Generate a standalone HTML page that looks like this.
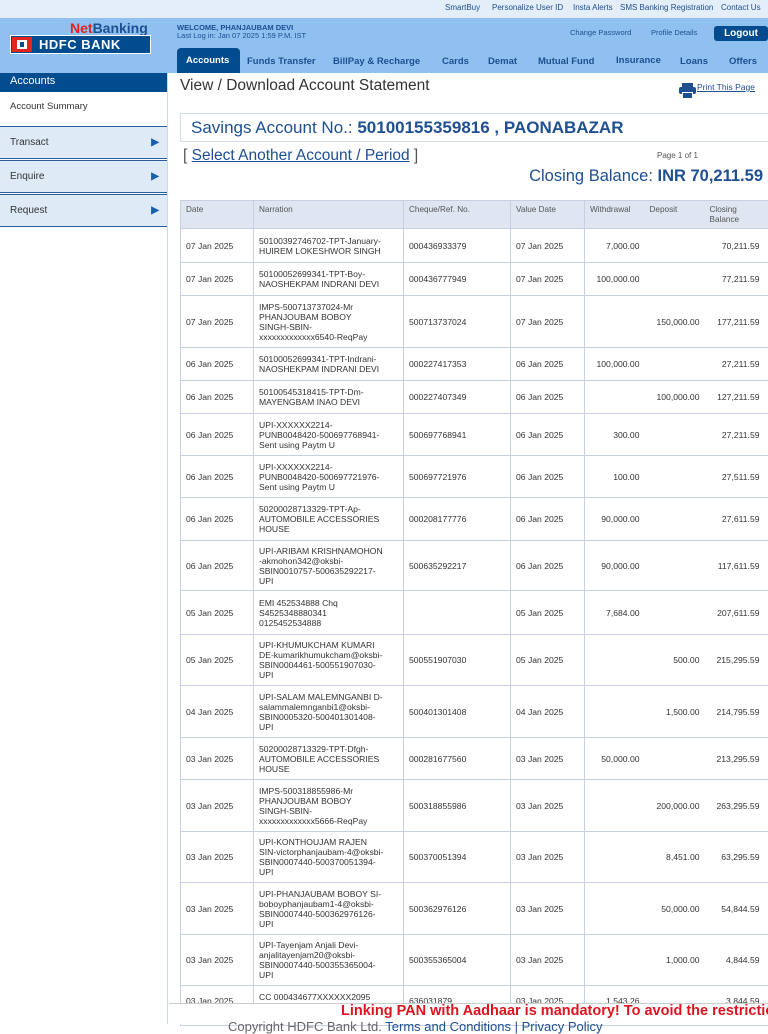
<!DOCTYPE html>
<html><head><meta charset="utf-8"><style>
*{margin:0;padding:0;box-sizing:border-box}
body{width:768px;height:1024px;overflow:hidden;background:#fff;font-family:"Liberation Sans",Arial,sans-serif;position:relative;color:#333}
.abs{position:absolute}
#top{left:0;top:0;width:768px;height:18px;background:#e3eef9}
#top span{position:absolute;top:3px;font-size:8px;color:#1d4f91}
#hdr{left:0;top:18px;width:768px;height:55px;background:#8fc0ef}
#side{left:0;top:73px;width:168px;height:951px;background:#fff;border-right:1px solid #cfd8e3}
.nav{position:absolute;top:49px;font-size:9.5px;color:#1d4f91;font-weight:bold}
.menu{position:absolute;left:0;width:167px;height:33px;background:#deebf7;border-top:1px solid #2c5f9e;border-bottom:1px solid #2c5f9e;font-size:10px;color:#333;padding:10px 0 0 10px}
.menu b{position:absolute;right:8px;top:10px;color:#1a5fae;font-size:10px}
table{position:absolute;left:180px;top:200px;width:600px;border-collapse:collapse;font-size:8.6px;color:#333;table-layout:fixed}
td{border:1px solid #c9cfe3;padding:0 5px;line-height:10px;vertical-align:middle;white-space:nowrap;overflow:hidden}
tr td:nth-child(n+5){border-left:none;border-right:none}
td.r{text-align:right}
td.c{text-align:right;padding-right:21px}
tr.h td{background:#dfe6f1;vertical-align:top;padding-top:4px;color:#555;font-size:8.2px}
</style></head><body>
<div id="top" class="abs">
<span style="left:445px">SmartBuy</span><span style="left:492px">Personalize User ID</span><span style="left:573px">Insta Alerts</span><span style="left:620px">SMS Banking Registration</span><span style="left:721px">Contact Us</span>
</div>
<div id="hdr" class="abs">
<div class="abs" style="left:70px;top:2px;font-size:14px;font-weight:bold"><span style="color:#e0261f">Net</span><span style="color:#1d4f91">Banking</span></div>
<div class="abs" style="left:10px;top:17px;width:141px;height:19px;background:#004c8f;border:1px solid #fff">
 <div class="abs" style="left:1px;top:1px;width:20px;height:15px;background:#e0261f"></div>
 <div class="abs" style="left:6px;top:4px;width:10px;height:9px;background:#fff"></div>
 <div class="abs" style="left:9px;top:6px;width:4px;height:5px;background:#004c8f"></div>
 <div class="abs" style="left:28px;top:1px;color:#fff;font-weight:900;font-size:13px;letter-spacing:.5px">HDFC BANK</div>
</div>
<div class="abs" style="left:177px;top:6px;font-size:7.5px;color:#1d4f91;line-height:8px;font-weight:bold">WELCOME, PHANJAUBAM DEVI<br><span style="font-weight:normal">Last Log in: Jan 07 2025 1:59 P.M. IST</span></div>
<div class="abs" style="left:570px;top:10px;font-size:7.5px;color:#1d4f91">Change Password</div>
<div class="abs" style="left:651px;top:10px;font-size:7.5px;color:#1d4f91">Profile Details</div>
<div class="abs" style="left:714px;top:8px;width:54px;height:15px;background:#004c8f;border-radius:3px;color:#fff;font-size:10px;font-weight:bold;text-align:center;line-height:15px">Logout</div>
<div class="abs" style="left:177px;top:30px;width:63px;height:25px;background:#004c8f;border-radius:4px 4px 0 0"></div>
<div class="nav" style="left:186px;top:37px;color:#fff">Accounts</div>
<div class="nav" style="left:247px;top:38px">Funds Transfer</div>
<div class="nav" style="left:333px;top:38px">BillPay &amp; Recharge</div>
<div class="nav" style="left:442px;top:38px">Cards</div>
<div class="nav" style="left:488px;top:38px">Demat</div>
<div class="nav" style="left:538px;top:38px">Mutual Fund</div>
<div class="nav" style="left:616px;top:37px">Insurance</div>
<div class="nav" style="left:680px;top:38px">Loans</div>
<div class="nav" style="left:729px;top:38px">Offers</div>
</div>
<div id="side" class="abs">
<div class="abs" style="left:0;top:0;width:167px;height:19px;background:#004c8f;color:#fff;font-size:11px;padding:2px 0 0 10px">Accounts</div>
<div class="abs" style="left:10px;top:28px;font-size:9.5px;color:#333">Account Summary</div>
<div class="menu" style="top:53px">Transact<b>▶</b></div>
<div class="menu" style="top:87px">Enquire<b>▶</b></div>
<div class="menu" style="top:121px">Request<b>▶</b></div>
</div>
<div class="abs" style="left:180px;top:77px;font-size:15.5px;color:#333">View / Download Account Statement</div>
<div class="abs" style="left:679px;top:83px;width:17px;height:16px"><div class="abs" style="left:3px;top:0;width:11px;height:4px;background:#1d4f91"></div><div class="abs" style="left:0;top:4px;width:17px;height:7px;background:#1d4f91;border-radius:2px"></div><div class="abs" style="left:3px;top:9px;width:11px;height:7px;background:#1d4f91;border:1px solid #fff"></div></div>
<div class="abs" style="left:697px;top:82px;font-size:8.5px;color:#1d4f91;text-decoration:underline">Print This Page</div>
<div class="abs" style="left:180px;top:113px;width:600px;height:29px;border:1px solid #d3dbe6;font-size:17px;color:#1d4f91;padding:4px 0 0 10px;white-space:nowrap">Savings Account No.: <b>50100155359816 , PAONABAZAR</b></div>
<div class="abs" style="left:183px;top:147px;font-size:15.5px;color:#555">[ <span style="color:#1d4f91;text-decoration:underline">Select Another Account / Period</span> ]</div>
<div class="abs" style="left:657px;top:151px;font-size:8px;color:#555">Page 1 of 1</div>
<div class="abs" style="right:5px;top:167px;font-size:16.5px;color:#1d4f91;white-space:nowrap">Closing Balance: <b>INR 70,211.59</b></div>
<table>
<colgroup><col style="width:73px"><col style="width:150px"><col style="width:107px"><col style="width:74px"><col style="width:60px"><col style="width:60px"><col style="width:76px"></colgroup>
<tr class="h" style="height:28px"><td>Date</td><td>Narration</td><td>Cheque/Ref. No.</td><td>Value Date</td><td>Withdrawal</td><td>Deposit</td><td>Closing<br>Balance</td></tr>
<tr style="height:34px"><td>07 Jan 2025</td><td>50100392746702-TPT-January-<br>HUIREM LOKESHWOR SINGH</td><td>000436933379</td><td>07 Jan 2025</td><td class="r">7,000.00</td><td></td><td class="c">70,211.59</td></tr>
<tr style="height:33px"><td>07 Jan 2025</td><td>50100052699341-TPT-Boy-<br>NAOSHEKPAM INDRANI DEVI</td><td>000436777949</td><td>07 Jan 2025</td><td class="r">100,000.00</td><td></td><td class="c">77,211.59</td></tr>
<tr style="height:52px"><td>07 Jan 2025</td><td>IMPS-500713737024-Mr<br>PHANJOUBAM BOBOY<br>SINGH-SBIN-<br>xxxxxxxxxxxxx6540-ReqPay</td><td>500713737024</td><td>07 Jan 2025</td><td></td><td class="r">150,000.00</td><td class="c">177,211.59</td></tr>
<tr style="height:33px"><td>06 Jan 2025</td><td>50100052699341-TPT-Indrani-<br>NAOSHEKPAM INDRANI DEVI</td><td>000227417353</td><td>06 Jan 2025</td><td class="r">100,000.00</td><td></td><td class="c">27,211.59</td></tr>
<tr style="height:33px"><td>06 Jan 2025</td><td>50100545318415-TPT-Dm-<br>MAYENGBAM INAO DEVI</td><td>000227407349</td><td>06 Jan 2025</td><td></td><td class="r">100,000.00</td><td class="c">127,211.59</td></tr>
<tr style="height:42px"><td>06 Jan 2025</td><td>UPI-XXXXXX2214-<br>PUNB0048420-500697768941-<br>Sent using Paytm U</td><td>500697768941</td><td>06 Jan 2025</td><td class="r">300.00</td><td></td><td class="c">27,211.59</td></tr>
<tr style="height:42px"><td>06 Jan 2025</td><td>UPI-XXXXXX2214-<br>PUNB0048420-500697721976-<br>Sent using Paytm U</td><td>500697721976</td><td>06 Jan 2025</td><td class="r">100.00</td><td></td><td class="c">27,511.59</td></tr>
<tr style="height:43px"><td>06 Jan 2025</td><td>50200028713329-TPT-Ap-<br>AUTOMOBILE ACCESSORIES<br>HOUSE</td><td>000208177776</td><td>06 Jan 2025</td><td class="r">90,000.00</td><td></td><td class="c">27,611.59</td></tr>
<tr style="height:50px"><td>06 Jan 2025</td><td>UPI-ARIBAM KRISHNAMOHON<br>-akmohon342@oksbi-<br>SBIN0010757-500635292217-<br>UPI</td><td>500635292217</td><td>06 Jan 2025</td><td class="r">90,000.00</td><td></td><td class="c">117,611.59</td></tr>
<tr style="height:44px"><td>05 Jan 2025</td><td>EMI 452534888 Chq<br>S4525348880341<br>0125452534888</td><td></td><td>05 Jan 2025</td><td class="r">7,684.00</td><td></td><td class="c">207,611.59</td></tr>
<tr style="height:51px"><td>05 Jan 2025</td><td>UPI-KHUMUKCHAM KUMARI<br>DE-kumarikhumukcham@oksbi-<br>SBIN0004461-500551907030-<br>UPI</td><td>500551907030</td><td>05 Jan 2025</td><td></td><td class="r">500.00</td><td class="c">215,295.59</td></tr>
<tr style="height:52px"><td>04 Jan 2025</td><td>UPI-SALAM MALEMNGANBI D-<br>salammalemnganbi1@oksbi-<br>SBIN0005320-500401301408-<br>UPI</td><td>500401301408</td><td>04 Jan 2025</td><td></td><td class="r">1,500.00</td><td class="c">214,795.59</td></tr>
<tr style="height:42px"><td>03 Jan 2025</td><td>50200028713329-TPT-Dfgh-<br>AUTOMOBILE ACCESSORIES<br>HOUSE</td><td>000281677560</td><td>03 Jan 2025</td><td class="r">50,000.00</td><td></td><td class="c">213,295.59</td></tr>
<tr style="height:52px"><td>03 Jan 2025</td><td>IMPS-500318855986-Mr<br>PHANJOUBAM BOBOY<br>SINGH-SBIN-<br>xxxxxxxxxxxxx5666-ReqPay</td><td>500318855986</td><td>03 Jan 2025</td><td></td><td class="r">200,000.00</td><td class="c">263,295.59</td></tr>
<tr style="height:51px"><td>03 Jan 2025</td><td>UPI-KONTHOUJAM RAJEN<br>SIN-victorphanjaubam-4@oksbi-<br>SBIN0007440-500370051394-<br>UPI</td><td>500370051394</td><td>03 Jan 2025</td><td></td><td class="r">8,451.00</td><td class="c">63,295.59</td></tr>
<tr style="height:52px"><td>03 Jan 2025</td><td>UPI-PHANJAUBAM BOBOY SI-<br>boboyphanjaubam1-4@oksbi-<br>SBIN0007440-500362976126-<br>UPI</td><td>500362976126</td><td>03 Jan 2025</td><td></td><td class="r">50,000.00</td><td class="c">54,844.59</td></tr>
<tr style="height:51px"><td>03 Jan 2025</td><td>UPI-Tayenjam Anjali Devi-<br>anjalitayenjam20@oksbi-<br>SBIN0007440-500355365004-<br>UPI</td><td>500355365004</td><td>03 Jan 2025</td><td></td><td class="r">1,000.00</td><td class="c">4,844.59</td></tr>
<tr style="height:40px"><td style="vertical-align:top;padding-top:10px">03 Jan 2025</td><td style="vertical-align:top;padding-top:6px">CC 000434677XXXXXX2095<br>AUTOPAY</td><td style="vertical-align:top;padding-top:10px">636031879</td><td style="vertical-align:top;padding-top:10px">03 Jan 2025</td><td class="r" style="vertical-align:top;padding-top:10px">1,543.26</td><td></td><td class="c" style="vertical-align:top;padding-top:10px">3,844.59</td></tr>
</table>
<div class="abs" style="left:169px;top:1003px;width:599px;height:21px;background:#fff;border-top:1px solid #ccc"></div>
<div class="abs" style="left:341px;top:1003px;font-size:14.5px;font-weight:bold;color:#e0141e;white-space:nowrap">Linking PAN with Aadhaar is mandatory! To avoid the restrictions</div>
<div class="abs" style="left:228px;top:1019px;font-size:13px;color:#666;white-space:nowrap">Copyright HDFC Bank Ltd. <span style="color:#1d4f91">Terms and Conditions | Privacy Policy</span></div>
</body></html>
